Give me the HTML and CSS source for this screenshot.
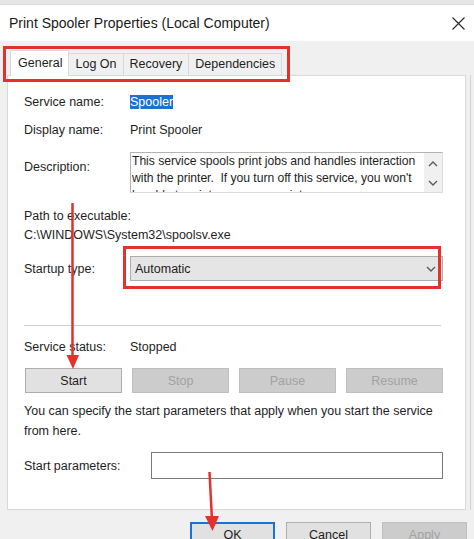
FILE: index.html
```html
<!DOCTYPE html>
<html>
<head>
<meta charset="utf-8">
<link rel="stylesheet" href="styles.css">
</head>
<body>
<div class="topstrip"></div>
<div class="titlebar">
  <span class="title">Print Spooler Properties (Local Computer)</span>
  <svg class="close" viewBox="0 0 13 13"><path d="M0.5 0.5 L12.5 12.5 M12.5 0.5 L0.5 12.5" /></svg>
</div>
<div class="main">
  <div class="tabs">
    <div class="tab active">General</div>
    <div class="tab">Log On</div>
    <div class="tab">Recovery</div>
    <div class="tab">Dependencies</div>
  </div>
  <div class="panel">
    <div class="row r-name"><div class="label">Service name:</div><div class="value"><span class="sel">Spooler</span></div></div>
    <div class="row r-display"><div class="label">Display name:</div><div class="value">Print Spooler</div></div>
    <div class="row r-desc">
      <div class="label label-desc">Description:</div>
      <div class="descbox">
        <div class="desctext">This service spools print jobs and handles interaction<br>with the printer.&nbsp; If you turn off this service, you won't<br>be able to print or see your printers.</div>
        <div class="scroll">
          <svg class="chev" viewBox="0 0 10 6"><path d="M1 5 L5 1 L9 5" /></svg>
          <svg class="chev" viewBox="0 0 10 6"><path d="M1 1 L5 5 L9 1" /></svg>
        </div>
      </div>
    </div>
    <div class="path">Path to executable:<br>C:\WINDOWS\System32\spoolsv.exe</div>
    <div class="row r-startup">
      <div class="label">Startup type:</div>
      <div class="select"><span>Automatic</span><svg class="selchev" viewBox="0 0 10 6"><path d="M1 1 L5 5 L9 1" /></svg></div>
    </div>
    <div class="sep"></div>
    <div class="row r-status"><div class="label">Service status:</div><div class="value">Stopped</div></div>
    <div class="btnrow">
      <div class="btn">Start</div>
      <div class="btn disabled">Stop</div>
      <div class="btn disabled">Pause</div>
      <div class="btn disabled">Resume</div>
    </div>
    <div class="info">You can specify the start parameters that apply when you start the service<br>from here.</div>
    <div class="row r-params">
      <div class="label label-wide">Start parameters:</div>
      <div class="input"></div>
    </div>
  </div>
  <div class="footer">
    <div class="fbtn default">OK</div>
    <div class="fbtn">Cancel</div>
    <div class="fbtn disabled">Apply</div>
  </div>
</div>
<div class="mark mark-tabs"></div>
<div class="mark mark-startup"></div>
<svg class="arrows" viewBox="0 0 474 539">
  <line x1="72.5" y1="203" x2="72.5" y2="358" />
  <polygon points="66.5,355 79,355 73,369" />
  <line x1="209.5" y1="472" x2="212" y2="520" />
  <polygon points="205,516 219,516 212.5,531" />
</svg>
</body>
</html>
```

FILE: styles.css
```css
html, body {
  margin: 0;
  padding: 0;
}
body {
  background: #f0f0f0;
  font-family: "Liberation Sans", Arial, sans-serif;
  font-size: 12.5px;
  color: #1e1e1e;
  position: relative;
  width: 474px;
  height: 539px;
  overflow: hidden;
}
.topstrip {
  height: 4px;
  background: #e6e6e6;
  border-bottom: 1px solid #d9d9d9;
}
.titlebar {
  height: 36px;
  background: #fff;
  display: flex;
  align-items: center;
  justify-content: space-between;
  padding: 0 9px;
}
.title {
  font-size: 14px;
  color: #1a1a1a;
}
.close {
  width: 13px;
  height: 13px;
  margin-top: 1px;
}
.close path {
  stroke: #2a2a2a;
  stroke-width: 1.2;
  fill: none;
}
.main {
  padding-top: 9px;
}
.tabs {
  display: flex;
  align-items: flex-end;
  padding-left: 10px;
  height: 25px;
  position: relative;
  z-index: 1;
}
.tab {
  box-sizing: border-box;
  height: 22px;
  line-height: 21px;
  padding: 0 6px;
  background: #f0f0f0;
  border: 1px solid #d9d9d9;
  border-bottom: none;
  border-left: none;
  color: #1e1e1e;
}
.tab.active {
  height: 26px;
  line-height: 24px;
  margin-bottom: -1px;
  background: #fff;
  border-left: 1px solid #d9d9d9;
  padding: 0 6px 0 7px;
}
.panel {
  margin-left: 7px;
  width: 459px;
  height: 435px;
  box-sizing: border-box;
  border: 1px solid #d9d9d9;
  background: #fff;
  padding: 0 22px 0 16px;
  box-shadow: 4px 0 0 0 #f0f0f0, 5px 0 0 0 #d4d4d4;
}
.row {
  display: flex;
  line-height: 16px;
}
.label {
  width: 106px;
  flex: none;
}
.label-wide {
  width: 127px;
}
.r-name { margin-top: 18px; }
.r-display { margin-top: 12px; }
.r-desc { margin-top: 14px; }
.label-desc { padding-top: 7px; }
.sel {
  background: #1a73d2;
  color: #fff;
}
.descbox {
  box-sizing: border-box;
  width: 313px;
  height: 41px;
  border: 1px solid #b4b4b4;
  border-right-color: #dcdcdc;
  border-bottom-color: #dcdcdc;
  display: flex;
  overflow: hidden;
}
.desctext {
  flex: 1;
  padding-left: 1px;
  font-size: 12.2px;
  letter-spacing: -0.05px;
  line-height: 17px;
  white-space: nowrap;
  overflow: hidden;
}
.scroll {
  width: 18px;
  flex: none;
  background: #f0f0f0;
  display: flex;
  flex-direction: column;
  align-items: center;
  padding-top: 8px;
  gap: 13px;
  box-sizing: border-box;
}
.chev {
  width: 10px;
  height: 6px;
}
.chev path, .selchev path {
  stroke: #5c5c5c;
  stroke-width: 1.4;
  fill: none;
}
.path {
  margin-top: 14px;
  line-height: 19px;
}
.r-startup {
  margin-top: 11px;
  align-items: center;
}
.select {
  box-sizing: border-box;
  width: 314px;
  height: 25px;
  background: #e5e5e5;
  border: 1px solid #adadad;
  display: flex;
  align-items: center;
  justify-content: space-between;
  padding: 0 6px 0 4px;
}
.selchev {
  width: 10px;
  height: 6px;
}
.sep {
  margin-top: 44px;
  height: 1px;
  width: 417px;
  background: #cfcfcf;
}
.r-status { margin-top: 13px; }
.btnrow {
  margin-top: 13px;
  margin-left: 1px;
  display: grid;
  grid-template-columns: repeat(4, 1fr);
  gap: 10px;
}
.btn {
  box-sizing: border-box;
  height: 25px;
  border: 1px solid #adadad;
  background: #e1e1e1;
  display: flex;
  align-items: center;
  justify-content: center;
}
.btn.disabled {
  background: #cccccc;
  border-color: #bfbfbf;
  color: #a2a2a2;
}
.info {
  margin-top: 8px;
  line-height: 20px;
  white-space: nowrap;
}
.r-params {
  margin-top: 11px;
  align-items: center;
}
.input {
  box-sizing: border-box;
  width: 294px;
  height: 27px;
  border: 1px solid #7a7a7a;
  background: #fff;
}
.footer {
  display: flex;
  justify-content: flex-end;
  gap: 11px;
  padding: 12px 7px 0 0;
}
.fbtn {
  box-sizing: border-box;
  width: 85px;
  height: 25px;
  border: 1px solid #adadad;
  background: #e1e1e1;
  display: flex;
  align-items: center;
  justify-content: center;
}
.fbtn.default {
  border: 2px solid #1a73d2;
}
.fbtn.disabled {
  background: #cccccc;
  border-color: #bfbfbf;
  color: #a2a2a2;
}
.mark {
  position: absolute;
  box-sizing: border-box;
  border: 3px solid #e5302b;
  z-index: 3;
}
.mark-tabs {
  left: 3px;
  top: 46px;
  width: 287px;
  height: 36px;
}
.mark-startup {
  left: 123px;
  top: 246px;
  width: 318px;
  height: 43px;
}
.arrows {
  position: absolute;
  left: 0;
  top: 0;
  width: 474px;
  height: 539px;
  z-index: 4;
  pointer-events: none;
}
.arrows line {
  stroke: #e5302b;
  stroke-width: 2.5;
}
.arrows polygon {
  fill: #e5302b;
}
```
